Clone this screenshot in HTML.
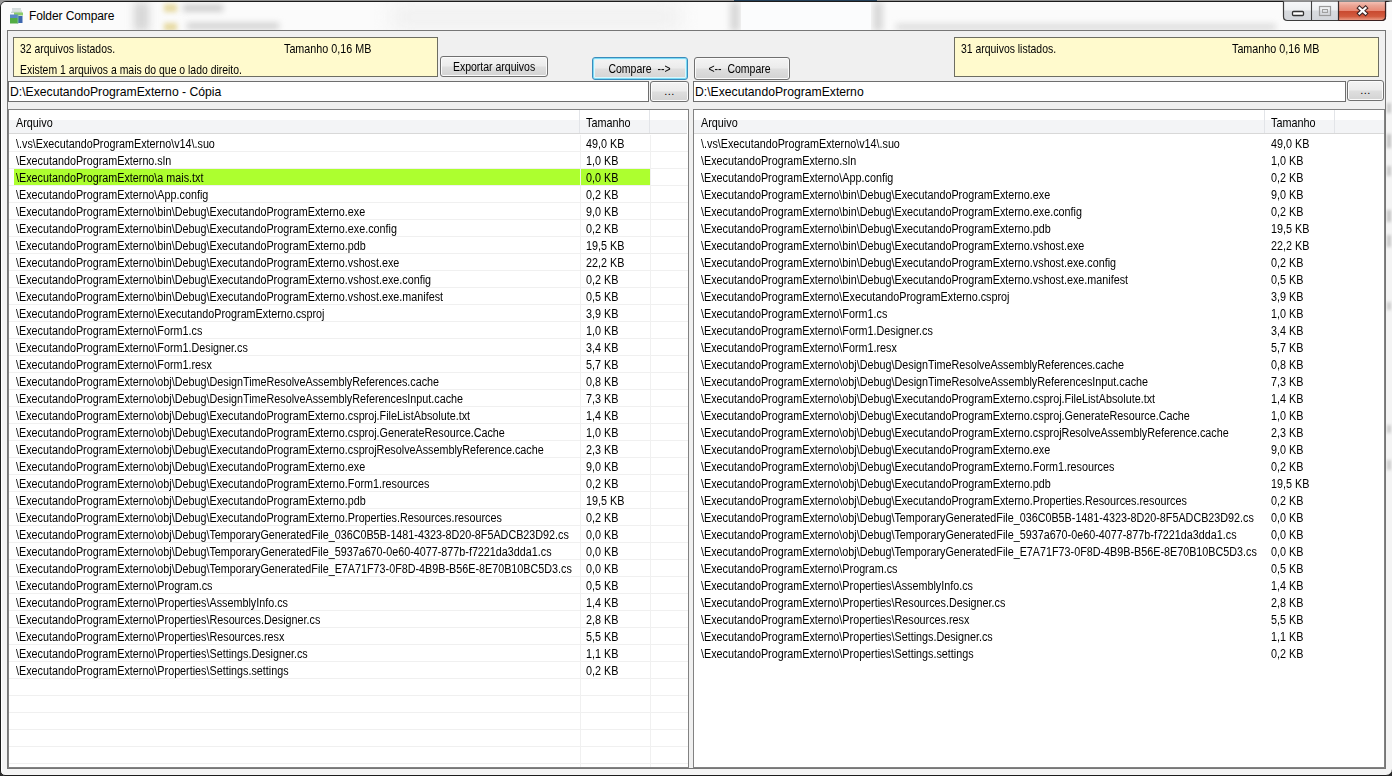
<!DOCTYPE html>
<html><head><meta charset="utf-8">
<style>
*{margin:0;padding:0;box-sizing:border-box}
html,body{width:1392px;height:776px;overflow:hidden;background:#959595}
body{position:relative;font-family:"Liberation Sans",sans-serif;font-size:11px;color:#000}
.abs{position:absolute}
#frame{left:0;top:1px;width:1393px;height:775px;border:1px solid #1c1c1c;border-radius:6px 6px 7px 5px;background:#f4f4f4;box-shadow:inset 1px 1px 0 #fff}
#client{left:7px;top:30px;width:1379px;height:739px;background:#f0f0f0;border:1px solid #767676}
.title{left:29px;top:9px;font-size:12px;letter-spacing:-0.1px;color:#000;line-height:15px}
.yb{background:#fffacd;border:1px solid #6d6d62}
.yb span{position:absolute;white-space:nowrap;font-size:12.1px;line-height:13px;transform:scaleX(0.862);transform-origin:0 0}
.yb span.tm{transform:scaleX(0.89)}
.btn{border:1px solid #707070;border-radius:3px;background:linear-gradient(#f4f4f4 0,#ececec 45%,#dedede 55%,#d3d3d3 100%);box-shadow:inset 0 0 0 1px #fbfbfb;text-align:center;font-size:11px;letter-spacing:-0.3px;white-space:nowrap}
.btn b{font-weight:normal;display:inline-block;font-size:12px;letter-spacing:0;transform:scaleX(0.875);transform-origin:50% 50%}
.btn.focus{border-color:#3a8cbc;box-shadow:inset 0 0 0 1px #7cdaf4, inset 0 0 0 2px #dcf6fc}
.tb{background:#fff;border:1px solid #6e6e6e}
.tb span{position:absolute;left:1px;top:3px;white-space:nowrap;font-size:12.2px;line-height:14px}
.lv{background:#fff;border:1px solid #828282;overflow:hidden}
.hdr{position:absolute;left:0;top:0;width:678px;height:24px;background:linear-gradient(#fff 0,#fff 10px,#f3f4f6 10px,#f3f4f6 100%);border-bottom:1px solid #d8d8d8}
.hdr span{position:absolute;top:7px;font-size:11.9px;line-height:13px;white-space:nowrap;transform:scaleX(0.91);transform-origin:0 0}
.hsep{position:absolute;top:0;width:1px;height:23px;background:#e2e4e8}
.rows{position:absolute;left:0;top:25px;right:0}
.r{position:relative;height:17px;white-space:nowrap}
.r span{position:absolute;top:3px;line-height:13px;font-size:12px;transform:scaleX(0.898);transform-origin:0 0}
.lv .a{left:7px} .lv .t{left:577px}
#lvL .r{border-bottom:1px solid #f0f0f0}
.r.g::before{content:"";position:absolute;left:5px;top:0;width:636px;height:16px;background:#adff2f}
.r.g::after{content:"";position:absolute;left:571px;top:0;width:1px;height:16px;background:#f0f0f0}
.vgrid{position:absolute;top:25px;bottom:0;width:1px;background:#f0f0f0}
</style></head><body>
<div class="abs" style="left:0;top:768px;width:8px;height:8px;background:#2a2a2a"></div>
<div class="abs" style="left:1382px;top:766px;width:10px;height:10px;background:#2a2a2a"></div>
<div id="frame" class="abs"></div>
<div class="abs" style="left:1386px;top:30px;width:6px;height:745px;overflow:hidden">
 <div class="abs" style="left:1px;top:73px;width:4px;height:10px;background:#c8c8c8;filter:blur(1.5px)"></div>
 <div class="abs" style="left:1px;top:104px;width:4px;height:14px;background:#c4c4c4;filter:blur(1.5px)"></div>
 <div class="abs" style="left:1px;top:136px;width:4px;height:10px;background:#c8c8c8;filter:blur(1.5px)"></div>
 <div class="abs" style="left:1px;top:180px;width:4px;height:12px;background:#c4c4c4;filter:blur(1.5px)"></div>
 <div class="abs" style="left:1px;top:205px;width:4px;height:12px;background:#c8c8c8;filter:blur(1.5px)"></div>
 <div class="abs" style="left:1px;top:272px;width:4px;height:8px;background:#cccccc;filter:blur(1.5px)"></div>
 <div class="abs" style="left:1px;top:395px;width:4px;height:8px;background:#cccccc;filter:blur(1.5px)"></div>
 <div class="abs" style="left:1px;top:430px;width:4px;height:10px;background:#cccccc;filter:blur(1.5px)"></div>
</div>

<div class="abs" style="left:1px;top:2px;width:1391px;height:28px;overflow:hidden;background:#fbfbfb;border-top-left-radius:5px">
 <div class="abs" style="left:133px;top:0;width:15px;height:29px;background:#d6d6d6;filter:blur(4px)"></div>
 <div class="abs" style="left:163px;top:2px;width:13px;height:8px;background:#e6d9a0;filter:blur(2.5px)"></div>
 <div class="abs" style="left:163px;top:21px;width:13px;height:8px;background:#e6d9a0;filter:blur(2.5px)"></div>
 <div class="abs" style="left:182px;top:3px;width:40px;height:6px;background:#c4c4c4;filter:blur(3px)"></div>
 <div class="abs" style="left:186px;top:21px;width:92px;height:6px;background:#cdcdcd;filter:blur(3px)"></div>
 <div class="abs" style="left:390px;top:2px;width:290px;height:26px;background:#f0f0f0;filter:blur(10px)"></div>
 <div class="abs" style="left:729px;top:0;width:10px;height:29px;background:#d8d8d8;filter:blur(3px)"></div>
 <div class="abs" style="left:872px;top:0;width:10px;height:29px;background:#d8d8d8;filter:blur(3px)"></div>
 <div class="abs" style="left:740px;top:0;width:130px;height:29px;background:#fbfcfd"></div>
 <div class="abs" style="left:895px;top:22px;width:380px;height:6px;background:#dadada;filter:blur(3px)"></div>
</div>
<div class="abs" style="left:734px;top:0;width:143px;height:1px;background:#24405a"></div>

<svg class="abs" style="left:10px;top:8px" width="13" height="16" viewBox="0 0 13 16">
 <rect x="2" y="0" width="9" height="1" fill="#d4dcdc"/>
 <rect x="2" y="1.3" width="9" height="1" fill="#c8d2d2"/>
 <rect x="2" y="2.6" width="10" height="1" fill="#c4d0cc"/>
 <rect x="1" y="3.8" width="11" height="1" fill="#b8ccc0"/>
 <rect x="4" y="4.5" width="9" height="3" fill="#8ccc6a"/>
 <rect x="0" y="6.5" width="8" height="3.5" fill="#5a88c4"/>
 <rect x="0" y="10" width="8" height="5.5" fill="#52ac44"/>
 <rect x="8" y="8" width="4.5" height="7" fill="#3d66ae"/>
 <rect x="7.5" y="7" width="1" height="8.5" fill="#7ab8a8"/>
</svg>
<div class="abs title">Folder Compare</div>
<svg class="abs" style="left:1282px;top:0" width="110" height="24" viewBox="0 0 110 24">
 <defs>
  <linearGradient id="gb" x1="0" y1="0" x2="0" y2="1">
   <stop offset="0" stop-color="#f7f8fa"/><stop offset="0.42" stop-color="#eef0f2"/><stop offset="0.52" stop-color="#d8dbdf"/><stop offset="1" stop-color="#d3d6db"/>
  </linearGradient>
  <linearGradient id="gr" x1="0" y1="0" x2="0" y2="1">
   <stop offset="0" stop-color="#f4c0b4"/><stop offset="0.2" stop-color="#eaa494"/><stop offset="0.48" stop-color="#e88a76"/><stop offset="0.52" stop-color="#c94a30"/><stop offset="0.8" stop-color="#d25a3e"/><stop offset="1" stop-color="#e99a84"/>
  </linearGradient>
 </defs>
 <path d="M1.5 1.5 V16.5 Q1.5 20.5 5.5 20.5 H99.5 Q103.5 20.5 103.5 16.5 V1.5" fill="url(#gb)" stroke="#3c3c3c" stroke-width="1.2"/>
 <path d="M57 2 H103 V17 Q103 20 100 20 H57 Z" fill="url(#gr)"/>
 <path d="M56.5 1 V20.5" stroke="#3a2a2a" stroke-width="1.2"/>
 <path d="M29.5 1 V20.5" stroke="#404040" stroke-width="1.1"/>
 <path d="M103.5 1 V16.5 Q103.5 20.5 99.5 20.5 H56.5" fill="none" stroke="#3a2020" stroke-width="1.2"/>
 <rect x="10.5" y="11.5" width="11" height="4" rx="1" fill="#fff" stroke="#333" stroke-width="1.3"/>
 <rect x="37.5" y="6.5" width="11" height="9" fill="none" stroke="#9a9a9a" stroke-width="1.2"/>
 <rect x="40.5" y="9.5" width="5" height="3" fill="none" stroke="#a0a0a0" stroke-width="1"/>
 <path d="M77.5 8 L83.5 13.5 M83.5 8 L77.5 13.5" stroke="#3c2424" stroke-width="4.4" stroke-linecap="square"/>
 <path d="M77.5 8 L83.5 13.5 M83.5 8 L77.5 13.5" stroke="#fff" stroke-width="2.3" stroke-linecap="square"/>
</svg>

<div id="client" class="abs"></div>

<div class="abs yb" style="left:13px;top:37px;width:425px;height:40px">
  <span style="left:6px;top:5px">32 arquivos listados.</span>
  <span class="tm" style="left:270px;top:5px">Tamanho 0,16 MB</span>
  <span style="left:6px;top:26px">Existem 1 arquivos a mais do que o lado direito.</span>
</div>
<div class="abs btn" style="left:440px;top:56px;width:108px;height:21px;line-height:21px"><b>Exportar arquivos</b></div>
<div class="abs btn focus" style="left:592px;top:57px;width:96px;height:23px;line-height:23px"><b>Compare&nbsp; --&gt;</b></div>
<div class="abs btn" style="left:694px;top:57px;width:96px;height:23px;line-height:23px;padding-right:4px"><b>&lt;--&nbsp; Compare</b></div>
<div class="abs yb" style="left:954px;top:37px;width:425px;height:40px">
  <span style="left:6px;top:5px">31 arquivos listados.</span>
  <span class="tm" style="left:277px;top:5px">Tamanho 0,16 MB</span>
</div>

<div class="abs tb" style="left:8px;top:81px;width:641px;height:21px"><span>D:\ExecutandoProgramExterno - Cópia</span></div>
<div class="abs btn" style="left:650px;top:81px;width:39px;height:21px;line-height:19px;letter-spacing:0.4px">...</div>
<div class="abs tb" style="left:693px;top:81px;width:653px;height:21px"><span>D:\ExecutandoProgramExterno</span></div>
<div class="abs btn" style="left:1347px;top:80px;width:37px;height:21px;line-height:19px;letter-spacing:0.4px">...</div>

<div class="abs lv" id="lvL" style="left:8px;top:109px;width:681px;height:659px">
  <div class="hdr"><span style="left:7px">Arquivo</span><span style="left:577px">Tamanho</span>
  <div class="hsep" style="left:570px"></div><div class="hsep" style="left:640px"></div></div>
  <div class="vgrid" style="left:571px"></div><div class="vgrid" style="left:641px"></div>
  <div class="rows" id="rowsL">
<div class="r"><span class="a">\.vs\ExecutandoProgramExterno\v14\.suo</span><span class="t">49,0 KB</span></div>
<div class="r"><span class="a">\ExecutandoProgramExterno.sln</span><span class="t">1,0 KB</span></div>
<div class="r g"><span class="a">\ExecutandoProgramExterno\a mais.txt</span><span class="t">0,0 KB</span></div>
<div class="r"><span class="a">\ExecutandoProgramExterno\App.config</span><span class="t">0,2 KB</span></div>
<div class="r"><span class="a">\ExecutandoProgramExterno\bin\Debug\ExecutandoProgramExterno.exe</span><span class="t">9,0 KB</span></div>
<div class="r"><span class="a">\ExecutandoProgramExterno\bin\Debug\ExecutandoProgramExterno.exe.config</span><span class="t">0,2 KB</span></div>
<div class="r"><span class="a">\ExecutandoProgramExterno\bin\Debug\ExecutandoProgramExterno.pdb</span><span class="t">19,5 KB</span></div>
<div class="r"><span class="a">\ExecutandoProgramExterno\bin\Debug\ExecutandoProgramExterno.vshost.exe</span><span class="t">22,2 KB</span></div>
<div class="r"><span class="a">\ExecutandoProgramExterno\bin\Debug\ExecutandoProgramExterno.vshost.exe.config</span><span class="t">0,2 KB</span></div>
<div class="r"><span class="a">\ExecutandoProgramExterno\bin\Debug\ExecutandoProgramExterno.vshost.exe.manifest</span><span class="t">0,5 KB</span></div>
<div class="r"><span class="a">\ExecutandoProgramExterno\ExecutandoProgramExterno.csproj</span><span class="t">3,9 KB</span></div>
<div class="r"><span class="a">\ExecutandoProgramExterno\Form1.cs</span><span class="t">1,0 KB</span></div>
<div class="r"><span class="a">\ExecutandoProgramExterno\Form1.Designer.cs</span><span class="t">3,4 KB</span></div>
<div class="r"><span class="a">\ExecutandoProgramExterno\Form1.resx</span><span class="t">5,7 KB</span></div>
<div class="r"><span class="a">\ExecutandoProgramExterno\obj\Debug\DesignTimeResolveAssemblyReferences.cache</span><span class="t">0,8 KB</span></div>
<div class="r"><span class="a">\ExecutandoProgramExterno\obj\Debug\DesignTimeResolveAssemblyReferencesInput.cache</span><span class="t">7,3 KB</span></div>
<div class="r"><span class="a">\ExecutandoProgramExterno\obj\Debug\ExecutandoProgramExterno.csproj.FileListAbsolute.txt</span><span class="t">1,4 KB</span></div>
<div class="r"><span class="a">\ExecutandoProgramExterno\obj\Debug\ExecutandoProgramExterno.csproj.GenerateResource.Cache</span><span class="t">1,0 KB</span></div>
<div class="r"><span class="a">\ExecutandoProgramExterno\obj\Debug\ExecutandoProgramExterno.csprojResolveAssemblyReference.cache</span><span class="t">2,3 KB</span></div>
<div class="r"><span class="a">\ExecutandoProgramExterno\obj\Debug\ExecutandoProgramExterno.exe</span><span class="t">9,0 KB</span></div>
<div class="r"><span class="a">\ExecutandoProgramExterno\obj\Debug\ExecutandoProgramExterno.Form1.resources</span><span class="t">0,2 KB</span></div>
<div class="r"><span class="a">\ExecutandoProgramExterno\obj\Debug\ExecutandoProgramExterno.pdb</span><span class="t">19,5 KB</span></div>
<div class="r"><span class="a">\ExecutandoProgramExterno\obj\Debug\ExecutandoProgramExterno.Properties.Resources.resources</span><span class="t">0,2 KB</span></div>
<div class="r"><span class="a">\ExecutandoProgramExterno\obj\Debug\TemporaryGeneratedFile_036C0B5B-1481-4323-8D20-8F5ADCB23D92.cs</span><span class="t">0,0 KB</span></div>
<div class="r"><span class="a">\ExecutandoProgramExterno\obj\Debug\TemporaryGeneratedFile_5937a670-0e60-4077-877b-f7221da3dda1.cs</span><span class="t">0,0 KB</span></div>
<div class="r"><span class="a">\ExecutandoProgramExterno\obj\Debug\TemporaryGeneratedFile_E7A71F73-0F8D-4B9B-B56E-8E70B10BC5D3.cs</span><span class="t">0,0 KB</span></div>
<div class="r"><span class="a">\ExecutandoProgramExterno\Program.cs</span><span class="t">0,5 KB</span></div>
<div class="r"><span class="a">\ExecutandoProgramExterno\Properties\AssemblyInfo.cs</span><span class="t">1,4 KB</span></div>
<div class="r"><span class="a">\ExecutandoProgramExterno\Properties\Resources.Designer.cs</span><span class="t">2,8 KB</span></div>
<div class="r"><span class="a">\ExecutandoProgramExterno\Properties\Resources.resx</span><span class="t">5,5 KB</span></div>
<div class="r"><span class="a">\ExecutandoProgramExterno\Properties\Settings.Designer.cs</span><span class="t">1,1 KB</span></div>
<div class="r"><span class="a">\ExecutandoProgramExterno\Properties\Settings.settings</span><span class="t">0,2 KB</span></div>
<div class="r"></div><div class="r"></div><div class="r"></div><div class="r"></div><div class="r"></div><div class="r"></div><div class="r"></div>
  </div>
</div>
<div class="abs lv" id="lvR" style="left:693px;top:109px;width:692px;height:659px">
  <div class="hdr" style="width:690px"><span style="left:7px">Arquivo</span><span style="left:577px">Tamanho</span>
  <div class="hsep" style="left:570px"></div><div class="hsep" style="left:640px"></div></div>
  <div class="rows" id="rowsR">
<div class="r"><span class="a">\.vs\ExecutandoProgramExterno\v14\.suo</span><span class="t">49,0 KB</span></div>
<div class="r"><span class="a">\ExecutandoProgramExterno.sln</span><span class="t">1,0 KB</span></div>
<div class="r"><span class="a">\ExecutandoProgramExterno\App.config</span><span class="t">0,2 KB</span></div>
<div class="r"><span class="a">\ExecutandoProgramExterno\bin\Debug\ExecutandoProgramExterno.exe</span><span class="t">9,0 KB</span></div>
<div class="r"><span class="a">\ExecutandoProgramExterno\bin\Debug\ExecutandoProgramExterno.exe.config</span><span class="t">0,2 KB</span></div>
<div class="r"><span class="a">\ExecutandoProgramExterno\bin\Debug\ExecutandoProgramExterno.pdb</span><span class="t">19,5 KB</span></div>
<div class="r"><span class="a">\ExecutandoProgramExterno\bin\Debug\ExecutandoProgramExterno.vshost.exe</span><span class="t">22,2 KB</span></div>
<div class="r"><span class="a">\ExecutandoProgramExterno\bin\Debug\ExecutandoProgramExterno.vshost.exe.config</span><span class="t">0,2 KB</span></div>
<div class="r"><span class="a">\ExecutandoProgramExterno\bin\Debug\ExecutandoProgramExterno.vshost.exe.manifest</span><span class="t">0,5 KB</span></div>
<div class="r"><span class="a">\ExecutandoProgramExterno\ExecutandoProgramExterno.csproj</span><span class="t">3,9 KB</span></div>
<div class="r"><span class="a">\ExecutandoProgramExterno\Form1.cs</span><span class="t">1,0 KB</span></div>
<div class="r"><span class="a">\ExecutandoProgramExterno\Form1.Designer.cs</span><span class="t">3,4 KB</span></div>
<div class="r"><span class="a">\ExecutandoProgramExterno\Form1.resx</span><span class="t">5,7 KB</span></div>
<div class="r"><span class="a">\ExecutandoProgramExterno\obj\Debug\DesignTimeResolveAssemblyReferences.cache</span><span class="t">0,8 KB</span></div>
<div class="r"><span class="a">\ExecutandoProgramExterno\obj\Debug\DesignTimeResolveAssemblyReferencesInput.cache</span><span class="t">7,3 KB</span></div>
<div class="r"><span class="a">\ExecutandoProgramExterno\obj\Debug\ExecutandoProgramExterno.csproj.FileListAbsolute.txt</span><span class="t">1,4 KB</span></div>
<div class="r"><span class="a">\ExecutandoProgramExterno\obj\Debug\ExecutandoProgramExterno.csproj.GenerateResource.Cache</span><span class="t">1,0 KB</span></div>
<div class="r"><span class="a">\ExecutandoProgramExterno\obj\Debug\ExecutandoProgramExterno.csprojResolveAssemblyReference.cache</span><span class="t">2,3 KB</span></div>
<div class="r"><span class="a">\ExecutandoProgramExterno\obj\Debug\ExecutandoProgramExterno.exe</span><span class="t">9,0 KB</span></div>
<div class="r"><span class="a">\ExecutandoProgramExterno\obj\Debug\ExecutandoProgramExterno.Form1.resources</span><span class="t">0,2 KB</span></div>
<div class="r"><span class="a">\ExecutandoProgramExterno\obj\Debug\ExecutandoProgramExterno.pdb</span><span class="t">19,5 KB</span></div>
<div class="r"><span class="a">\ExecutandoProgramExterno\obj\Debug\ExecutandoProgramExterno.Properties.Resources.resources</span><span class="t">0,2 KB</span></div>
<div class="r"><span class="a">\ExecutandoProgramExterno\obj\Debug\TemporaryGeneratedFile_036C0B5B-1481-4323-8D20-8F5ADCB23D92.cs</span><span class="t">0,0 KB</span></div>
<div class="r"><span class="a">\ExecutandoProgramExterno\obj\Debug\TemporaryGeneratedFile_5937a670-0e60-4077-877b-f7221da3dda1.cs</span><span class="t">0,0 KB</span></div>
<div class="r"><span class="a">\ExecutandoProgramExterno\obj\Debug\TemporaryGeneratedFile_E7A71F73-0F8D-4B9B-B56E-8E70B10BC5D3.cs</span><span class="t">0,0 KB</span></div>
<div class="r"><span class="a">\ExecutandoProgramExterno\Program.cs</span><span class="t">0,5 KB</span></div>
<div class="r"><span class="a">\ExecutandoProgramExterno\Properties\AssemblyInfo.cs</span><span class="t">1,4 KB</span></div>
<div class="r"><span class="a">\ExecutandoProgramExterno\Properties\Resources.Designer.cs</span><span class="t">2,8 KB</span></div>
<div class="r"><span class="a">\ExecutandoProgramExterno\Properties\Resources.resx</span><span class="t">5,5 KB</span></div>
<div class="r"><span class="a">\ExecutandoProgramExterno\Properties\Settings.Designer.cs</span><span class="t">1,1 KB</span></div>
<div class="r"><span class="a">\ExecutandoProgramExterno\Properties\Settings.settings</span><span class="t">0,2 KB</span></div>
  </div>
</div>
</body></html>
